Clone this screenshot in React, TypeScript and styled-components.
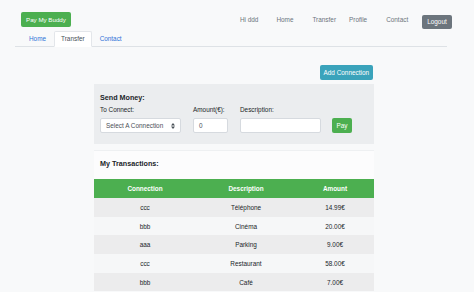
import styled, { createGlobalStyle } from 'styled-components';

const GlobalStyle = createGlobalStyle`
  body {
    margin: 0;
    background: #f8f9fa;
    font-family: "Liberation Sans", Arial, sans-serif;
    color: #212529;
  }
`;

const Page = styled.div`
  width: 474px;
  height: 292px;
  overflow: hidden;
`;

const Header = styled.header`
  display: flex;
  align-items: flex-start;
  height: 19px;
  padding: 12px 0 0 21px;
`;

const Brand = styled.button`
  height: 15px;
  padding: 0 5px;
  border: none;
  border-radius: 2px;
  background: #4caf50;
  color: #ffffff;
  font-family: inherit;
  font-size: 6.2px;
  line-height: 15px;
`;

const NavList = styled.nav`
  display: flex;
  align-items: flex-start;
  margin-left: 169px;
`;

const NavItem = styled.span<{ $left: number }>`
  margin-left: ${(p) => p.$left}px;
  font-size: 6.4px;
  line-height: 16px;
  color: #6c757d;
`;

const Logout = styled.button`
  margin: 3px 0 0 14px;
  height: 14px;
  padding: 0 5px;
  border: none;
  border-radius: 2px;
  background: #6c757d;
  color: #ffffff;
  font-family: inherit;
  font-size: 6.4px;
  line-height: 14px;
`;

const Tabs = styled.div`
  display: flex;
  margin: 0 27px 0 15px;
  padding-left: 7px;
  border-bottom: 1px solid #dee2e6;
`;

const Tab = styled.span<{ $active?: boolean }>`
  padding: 0 6px;
  margin-right: 1px;
  margin-bottom: -1px;
  font-size: 6.4px;
  line-height: 14px;
  color: ${(p) => (p.$active ? '#495057' : '#2f73d8')};
  background: ${(p) => (p.$active ? '#ffffff' : 'transparent')};
  border: 1px solid ${(p) => (p.$active ? '#e3e6ea' : 'transparent')};
  border-bottom-color: ${(p) => (p.$active ? '#ffffff' : 'transparent')};
  border-radius: 2px 2px 0 0;
`;

const Main = styled.main`
  width: 280px;
  margin-left: 94px;
`;

const Toolbar = styled.div`
  display: flex;
  justify-content: flex-end;
  margin-top: 18px;
  padding-right: 1px;
`;

const AddButton = styled.button`
  height: 15px;
  padding: 0 4px;
  border: none;
  border-radius: 2px;
  background: #3aa3bb;
  color: #ffffff;
  font-family: inherit;
  font-size: 6.4px;
  line-height: 15px;
`;

const Panel = styled.section`
  margin-top: 4px;
  height: 39px;
  padding: 9px 6px 12px;
  background: #ebedef;
`;

const Title = styled.h2`
  margin: 0;
  font-size: 7.2px;
  font-weight: 700;
  line-height: 10px;
  color: #212529;
`;

const FormRow = styled.div`
  display: flex;
  align-items: flex-end;
  margin-top: 3px;
`;

const Field = styled.label<{ $width: number; $gap: number }>`
  display: flex;
  flex-direction: column;
  width: ${(p) => p.$width}px;
  margin-right: ${(p) => p.$gap}px;
`;

const Label = styled.span`
  font-size: 6.4px;
  line-height: 8px;
  margin-bottom: 4px;
  color: #212529;
`;

const Input = styled.div`
  position: relative;
  box-sizing: border-box;
  height: 15px;
  padding-left: 5px;
  background: #ffffff;
  border: 1px solid #d6dadf;
  border-radius: 2px;
  font-size: 6.4px;
  line-height: 13px;
  color: #495057;
`;

const Arrow = styled.svg`
  position: absolute;
  right: 5px;
  top: 4px;
`;

const PayButton = styled.button`
  height: 15px;
  width: 20px;
  padding: 0;
  border: none;
  border-radius: 2px;
  background: #4caf50;
  color: #ffffff;
  font-family: inherit;
  font-size: 6.4px;
  line-height: 15px;
`;

const History = styled.section`
  margin-top: 6px;
  padding-top: 8px;
  border-top: 1px solid #eef0f2;
  background: #fcfcfd;
`;

const HistoryTitle = styled(Title)`
  margin-left: 6px;
`;

const Table = styled.table`
  width: 280px;
  margin-top: 10px;
  border-collapse: collapse;
  table-layout: fixed;
  font-size: 6.4px;
`;

const HeadCell = styled.th<{ $width: number }>`
  width: ${(p) => p.$width}px;
  height: 19px;
  padding: 0;
  background: #4caf50;
  color: #ffffff;
  font-weight: 700;
  text-align: center;
`;

const Row = styled.tr<{ $odd: boolean }>`
  height: 18.7px;
  background: ${(p) => (p.$odd ? '#ececed' : '#f6f7f8')};
`;

const Cell = styled.td`
  padding: 0;
  text-align: center;
  color: #212529;
`;

const navItems: [string, number][] = [
  ['Hi ddd', 0],
  ['Home', 18],
  ['Transfer', 19],
  ['Profile', 13],
  ['Contact', 19],
];

const transactions = [
  ['ccc', 'Téléphone', '14.99€'],
  ['bbb', 'Cinéma', '20.00€'],
  ['aaa', 'Parking', '9.00€'],
  ['ccc', 'Restaurant', '58.00€'],
  ['bbb', 'Café', '7.00€'],
];

function App() {
  return (
    <Page>
      <GlobalStyle />
      <Header>
        <Brand>Pay My Buddy</Brand>
        <NavList>
          {navItems.map(([text, left]) => (
            <NavItem key={text} $left={left}>
              {text}
            </NavItem>
          ))}
          <Logout>Logout</Logout>
        </NavList>
      </Header>
      <Tabs>
        <Tab>Home</Tab>
        <Tab $active>Transfer</Tab>
        <Tab>Contact</Tab>
      </Tabs>
      <Main>
        <Toolbar>
          <AddButton>Add Connection</AddButton>
        </Toolbar>
        <Panel>
          <Title>Send Money:</Title>
          <FormRow>
            <Field $width={81} $gap={12}>
              <Label>To Connect:</Label>
              <Input>
                Select A Connection
                <Arrow width="4" height="6" viewBox="0 0 4 6">
                  <path d="M0 2.4 L2 0 L4 2.4 Z M0 3.6 L2 6 L4 3.6 Z" fill="#495057" />
                </Arrow>
              </Input>
            </Field>
            <Field $width={35} $gap={12}>
              <Label>Amount(€):</Label>
              <Input>0</Input>
            </Field>
            <Field $width={81} $gap={11}>
              <Label>Description:</Label>
              <Input />
            </Field>
            <PayButton>Pay</PayButton>
          </FormRow>
        </Panel>
        <History>
          <HistoryTitle>My Transactions:</HistoryTitle>
          <Table>
            <thead>
              <tr>
                <HeadCell $width={102}>Connection</HeadCell>
                <HeadCell $width={100}>Description</HeadCell>
                <HeadCell $width={78}>Amount</HeadCell>
              </tr>
            </thead>
            <tbody>
              {transactions.map((t, i) => (
                <Row key={i} $odd={i % 2 === 0}>
                  {t.map((v) => (
                    <Cell key={v}>{v}</Cell>
                  ))}
                </Row>
              ))}
            </tbody>
          </Table>
        </History>
      </Main>
    </Page>
  );
}

export default App;
